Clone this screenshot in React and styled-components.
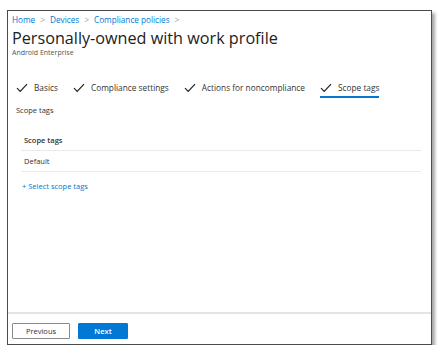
import React from "react";
import styled, { createGlobalStyle } from "styled-components";

const GlobalStyle = createGlobalStyle`
  body {
    margin: 0;
    background: #ffffff;
    font-family: "Segoe UI", "Open Sans", "Noto Sans", sans-serif;
  }
`;

const Frame = styled.div`
  margin: 10px 0 0 7px;
  width: 423px;
  height: 333px;
  border: 1px solid #4b4b4b;
  box-shadow: 3px 3px 3px rgba(0, 0, 0, 0.35);
  background: #fff;
  display: flex;
  flex-direction: column;
`;

const Body = styled.div`
  flex: 1;
  padding: 2px 10px 0 4px;
  display: flex;
  flex-direction: column;
`;

const Breadcrumb = styled.div`
  display: flex;
  align-items: center;
  gap: 5px;
  font-size: 8.2px;
  color: #0078d4;
  height: 12px;
`;

const Sep = styled.span`
  color: #a0a0a0;
  font-size: 8.5px;
`;

const Title = styled.h1`
  margin: 3px 0 0;
  font-size: 16.2px;
  font-weight: 500;
  color: #222;
  line-height: 20px;
`;

const Subtitle = styled.div`
  font-size: 7px;
  color: #555;
  line-height: 10px;
`;

const Tabs = styled.div`
  display: flex;
  margin: 21px 0 0 4px;
  gap: 15px;
`;

const Tab = styled.div`
  display: flex;
  align-items: center;
  gap: 6px;
  font-size: 8.3px;
  color: #333;
  height: 17px;
  border-bottom: 2px solid ${p => (p.$active ? "#0078d4" : "transparent")};
`;

const Check = () => (
  <svg width="12" height="10" viewBox="0 0 12 10">
    <path d="M1 5.2 L4.2 8.5 L11 1.2" fill="none" stroke="#222" strokeWidth="1.2" />
  </svg>
);

const SectionLabel = styled.div`
  margin: 7px 0 0 4px;
  font-size: 7.5px;
  color: #333;
`;

const Table = styled.div`
  margin: 15px 0 0 9px;
`;

const Row = styled.div`
  height: 20px;
  display: flex;
  align-items: center;
  padding-left: 3px;
  font-size: 7.5px;
  color: #333;
  font-weight: ${p => (p.$head ? 600 : 400)};
  border-bottom: 1px solid #eaeaea;
`;

const AddLink = styled.div`
  margin: 9px 0 0 10px;
  font-size: 7.5px;
  color: #0078d4;
`;

const Footer = styled.div`
  border-top: 2px solid #e4e4e4;
  height: 32px;
  display: flex;
  align-items: flex-start;
  gap: 8px;
  padding: 9px 0 0 4px;
  box-sizing: border-box;
`;

const Button = styled.button`
  width: ${p => p.$w}px;
  height: 16px;
  padding: 0;
  font-family: inherit;
  font-size: 7.5px;
  border-radius: 1px;
  border: 1px solid ${p => (p.$primary ? "#0078d4" : "#8a8a8a")};
  background: ${p => (p.$primary ? "#0078d4" : "#fff")};
  color: ${p => (p.$primary ? "#fff" : "#333")};
  font-weight: ${p => (p.$primary ? 600 : 400)};
`;

export default function App() {
  return (
    <>
      <GlobalStyle />
      <Frame>
        <Body>
          <Breadcrumb>
            <span>Home</span>
            <Sep>&gt;</Sep>
            <span>Devices</span>
            <Sep>&gt;</Sep>
            <span>Compliance policies</span>
            <Sep>&gt;</Sep>
          </Breadcrumb>
          <Title>Personally-owned with work profile</Title>
          <Subtitle>Android Enterprise</Subtitle>
          <Tabs>
            <Tab><Check />Basics</Tab>
            <Tab><Check />Compliance settings</Tab>
            <Tab><Check />Actions for noncompliance</Tab>
            <Tab $active><Check />Scope tags</Tab>
          </Tabs>
          <SectionLabel>Scope tags</SectionLabel>
          <Table>
            <Row $head>Scope tags</Row>
            <Row>Default</Row>
          </Table>
          <AddLink>+ Select scope tags</AddLink>
        </Body>
        <Footer>
          <Button $w={58}>Previous</Button>
          <Button $w={50} $primary>Next</Button>
        </Footer>
      </Frame>
    </>
  );
}
